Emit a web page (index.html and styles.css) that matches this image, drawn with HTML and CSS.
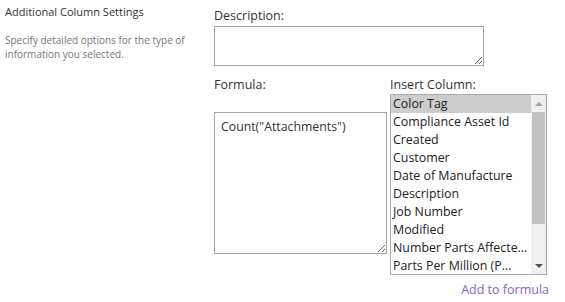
FILE: index.html
```html
<!DOCTYPE html>
<html>
<head>
<meta charset="utf-8">
<link rel="stylesheet" href="styles.css">
</head>
<body>
<div class="page">
  <div class="side">
    <div class="side-title">Additional Column Settings</div>
    <div class="side-desc">Specify detailed options for the type of information you selected.</div>
  </div>
  <div class="main">
    <div class="label">Description:</div>
    <textarea class="desc-box"></textarea>
    <div class="formula-row">
      <div class="formula-col">
        <div class="label">Formula:</div>
        <textarea class="formula-box">Count("Attachments")</textarea>
      </div>
      <div class="insert-col">
        <div class="label">Insert Column:</div>
        <div class="listbox">
          <div class="items">
            <div class="item selected">Color Tag</div>
            <div class="item">Compliance Asset Id</div>
            <div class="item">Created</div>
            <div class="item">Customer</div>
            <div class="item">Date of Manufacture</div>
            <div class="item">Description</div>
            <div class="item">Job Number</div>
            <div class="item">Modified</div>
            <div class="item">Number Parts Affecte...</div>
            <div class="item">Parts Per Million (P...</div>
          </div>
          <div class="scrollbar">
            <div class="arrow up"></div>
            <div class="track"><div class="thumb"></div></div>
            <div class="arrow down"></div>
          </div>
        </div>
        <div class="link-row"><a class="add-link" href="#">Add to formula</a></div>
      </div>
    </div>
  </div>
</div>
</body>
</html>
```
FILE: styles.css
```css
html, body {
  margin: 0;
  padding: 0;
  background: #ffffff;
}
body {
  font-family: "Open Sans", "Noto Sans", sans-serif;
  color: #333333;
}
.page {
  display: flex;
  width: 565px;
  height: 302px;
}
.side {
  width: 208px;
  padding: 3px 0 0 5px;
}
.side-title {
  font-size: 11px;
  line-height: 17px;
  color: #333333;
}
.side-desc {
  margin-top: 13px;
  font-size: 10px;
  line-height: 14px;
  color: #777777;
  width: 190px;
}
.main {
  display: flex;
  flex-direction: column;
  padding-top: 7px;
  padding-left: 1px;
}
.label {
  font-size: 12.5px;
  line-height: 18px;
  color: #333333;
}
textarea {
  box-sizing: border-box;
  border: 1px solid #a6a6a6;
  margin: 0;
  padding: 4px 6px;
  font-family: "Open Sans", "Noto Sans", sans-serif;
  font-size: 12.3px;
  color: #333333;
  outline: none;
  background: #fff;
}
.desc-box {
  width: 270px;
  height: 40px;
  margin-top: 1px;
}
.formula-row {
  display: flex;
  gap: 3px;
  margin-top: 10px;
}
.formula-col {
  display: flex;
  flex-direction: column;
  width: 173px;
}
.formula-box {
  width: 173px;
  height: 142px;
  margin-top: 18px;
  padding: 5px 6px;
}
.insert-col {
  display: flex;
  flex-direction: column;
  width: 157px;
}
.listbox {
  box-sizing: border-box;
  width: 157px;
  height: 181px;
  border: 1px solid #a9a9a9;
  display: flex;
  background: #fff;
}
.items {
  flex: 1;
  overflow: hidden;
}
.item {
  height: 18px;
  line-height: 18px;
  padding-left: 2px;
  font-size: 12.4px;
  color: #222222;
  white-space: nowrap;
}
.item.selected {
  background: #cdcdcd;
}
.scrollbar {
  width: 15px;
  background: #f0f0f0;
  display: flex;
  flex-direction: column;
}
.arrow {
  height: 17px;
  display: flex;
  align-items: center;
  justify-content: center;
}
.arrow.up::before {
  content: "";
  border-left: 4px solid transparent;
  border-right: 4px solid transparent;
  border-bottom: 4px solid #a3a3a3;
}
.arrow.down::before {
  content: "";
  border-left: 4px solid transparent;
  border-right: 4px solid transparent;
  border-top: 4px solid #505050;
}
.track {
  flex: 1;
  padding: 0 1px;
}
.thumb {
  height: 112px;
  background: #c1c1c1;
}
.link-row {
  display: flex;
  justify-content: flex-end;
  margin-top: 6px;
  margin-right: -2px;
}
.add-link {
  font-size: 12.5px;
  line-height: 18px;
  color: #8a63c5;
  text-decoration: none;
}
```
